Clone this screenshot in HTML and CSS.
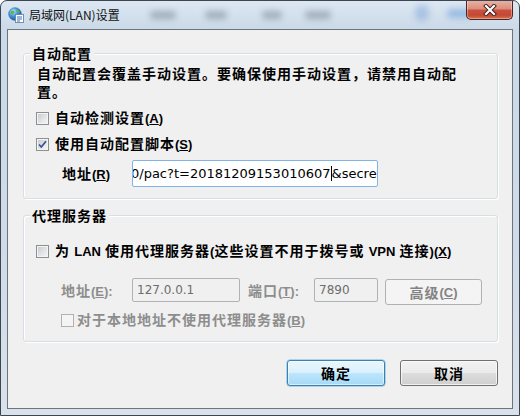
FILE: index.html
```html
<!DOCTYPE html>
<html lang="zh-CN">
<head>
<meta charset="utf-8">
<title>局域网(LAN)设置</title>
<link rel="stylesheet" href="styles.css">
</head>
<body>
<div class="window">
  <div class="titlebar">
    <div class="blur b1"></div>
    <div class="blur b2"></div>
    <div class="blur b3"></div>
    <div class="blur b4"></div>
    <div class="blur b5"></div>
    <div class="blur b6"></div>
    <svg class="appicon" width="16" height="16" viewBox="0 0 16 16">
      <defs>
        <radialGradient id="gl" cx="0.35" cy="0.3" r="0.8">
          <stop offset="0" stop-color="#bfe6ff"/>
          <stop offset="0.5" stop-color="#3d8fd8"/>
          <stop offset="1" stop-color="#1b4f9c"/>
        </radialGradient>
      </defs>
      <circle cx="7" cy="7" r="6.3" fill="url(#gl)" stroke="#2a5f9e" stroke-width="0.6"/>
      <path d="M3 4 C4.5 3 6 3.5 6.5 5 C6 6.5 4.5 6.5 4 8 C3 7.5 2.5 6 3 4 Z" fill="#5cb545"/>
      <path d="M8 2.5 C10 2.5 11.5 4 11.8 5.5 C10.5 6 9 5 8.5 4 Z" fill="#5cb545"/>
      <rect x="7.5" y="7.5" width="8" height="8" fill="#fff" stroke="#6b84a6" stroke-width="0.9"/>
      <path d="M9 10 H14 M9 12 H14 M9 14 H12" stroke="#3a6fc0" stroke-width="1"/>
    </svg>
    <span class="title">局域网(LAN)设置</span>
    <div class="close">
      <svg width="16" height="12" viewBox="0 0 16 12">
        <path d="M4 2 L12 10 M12 2 L4 10" stroke="#3b1b16" stroke-width="4" stroke-linecap="square"/>
        <path d="M4 2 L12 10 M12 2 L4 10" stroke="#ffffff" stroke-width="2.2" stroke-linecap="square"/>
      </svg>
    </div>
  </div>
  <div class="client">
    <fieldset class="group g1">
      <legend>自动配置</legend>
      <p class="desc">自动配置会覆盖手动设置。要确保使用手动设置，请禁用自动配<br>置。</p>
      <div class="check r1"><span class="cb"></span><span>自动检测设置<span class="lat">(<u>A</u>)</span></span></div>
      <div class="check r2"><span class="cb"><svg width="11" height="11" viewBox="0 0 11 11"><path d="M2 5.5 L4.3 8 L9 2.2" fill="none" stroke="#3a5294" stroke-width="1.7"/></svg></span><span>使用自动配置脚本<span class="lat">(<u>S</u>)</span></span></div>
      <div class="addr-row">
        <span class="lbl lbl-r">地址<span class="lat">(<u>R</u>)</span></span>
        <div class="input active"><span class="url">0/pac?t=20181209153010607<span class="caret"></span>&amp;secret=</span></div>
      </div>
    </fieldset>
    <fieldset class="group g2">
      <legend>代理服务器</legend>
      <div class="check r3"><span class="cb"></span><span>为 <span class="lat">LAN</span> 使用代理服务器<span class="lat">(</span>这些设置不用于拨号或 <span class="lat">VPN</span> 连接<span class="lat">)(<u>X</u>)</span></span></div>
      <div class="proxy-row">
        <span class="lbl lbl-e off">地址<span class="lat">(<u>E</u>):</span></span>
        <div class="input disabled ip">127.0.0.1</div>
        <span class="lbl lbl-t off">端口<span class="lat">(<u>T</u>):</span></span>
        <div class="input disabled port">7890</div>
        <div class="btn adv off">高级<span class="lat">(<u>C</u>)</span></div>
      </div>
      <div class="check r4 off"><span class="cb cb-off"></span><span>对于本地地址不使用代理服务器<span class="lat">(<u>B</u>)</span></span></div>
    </fieldset>
    <div class="buttons">
      <div class="btn ok">确定</div>
      <div class="btn cancel">取消</div>
    </div>
  </div>
</div>
</body>
</html>
```
FILE: styles.css
```css
body {
  margin: 0;
  background: #ffffff;
  font-family: "Noto Sans CJK SC", "Liberation Sans", sans-serif;
}

.window {
  width: 520px;
  height: 416px;
  box-sizing: border-box;
  border: 1px solid #3d4650;
  border-radius: 7px 7px 0 0;
  background: linear-gradient(180deg, #dce7f2 0px, #cbd9e8 28px, #cfdbe8 60%, #d9e2ec 100%);
  padding: 0 6px 6px 6px;
  display: flex;
  flex-direction: column;
  overflow: hidden;
}

.titlebar {
  height: 28px;
  box-sizing: border-box;
  padding-top: 5px;
  display: flex;
  align-items: flex-start;
  position: relative;
}

.blur {
  position: absolute;
  border-radius: 6px;
  filter: blur(3px);
  background: rgba(70, 80, 92, 0.35);
}
.b1 { left: 143px; top: 10px; width: 26px; height: 8px; }
.b2 { left: 198px; top: 10px; width: 22px; height: 8px; }
.b3 { left: 255px; top: 10px; width: 20px; height: 8px; }
.b4 { left: 298px; top: 10px; width: 26px; height: 8px; }
.b5 { left: 408px; top: 4px; width: 14px; height: 16px; background: rgba(90, 140, 210, 0.35); }
.b6 { left: 440px; top: 8px; width: 26px; height: 9px; background: rgba(80, 140, 215, 0.45); }

.appicon {
  width: 16px;
  height: 16px;
  margin-left: 1px;
  margin-top: 1px;
  position: relative;
}

.title {
  margin-left: 5px;
  font-size: 12px;
  line-height: 18px;
  color: #111;
  position: relative;
}

.close {
  position: absolute;
  top: -1px;
  right: 0;
  width: 47px;
  height: 20px;
  box-sizing: border-box;
  border: 1px solid #4f231c;
  border-top: none;
  border-radius: 0 0 5px 5px;
  background: linear-gradient(180deg, #eab4a6 0%, #dc8f7e 45%, #c8503d 55%, #c34a36 80%, #d7714f 100%);
  box-shadow: inset 0 0 0 1px rgba(255, 255, 255, 0.35);
  display: flex;
  align-items: center;
  justify-content: center;
}

.client {
  flex: 1;
  border: 1px solid #6d747c;
  background: #f0f0f0;
  display: flex;
  flex-direction: column;
  color: #000;
  font-size: 14px;
  font-weight: bold;
  letter-spacing: 1px;
}

.lat {
  font-family: "Liberation Sans", "DejaVu Sans", sans-serif;
  font-size: 13px;
  letter-spacing: 0;
}

fieldset.group {
  border: 1px solid #d5dfe5;
  border-radius: 3px;
  padding: 0 12px 11px 12px;
  min-width: 0;
  box-shadow: 1px 1px 0 #ffffff, inset 1px 1px 0 #ffffff;
}

.g1 { margin: 15px 14px 0 15px; }
.g2 { margin: 8px 14px 0 15px; padding-bottom: 17px; }

legend {
  padding: 0 2px;
  margin-left: -6px;
  font-size: 14px;
  line-height: 16px;
  background: #f0f0f0;
}

.desc {
  margin: 3px 0 0 1px;
  line-height: 18px;
}

.check {
  display: flex;
  align-items: center;
  height: 20px;
  line-height: 20px;
  white-space: nowrap;
}
.r1 { margin-top: 8px; }
.r2 { margin-top: 6px; }
.r3 { margin-top: 18px; }
.r4 { margin-top: 5px; margin-left: 25px; }

.cb {
  width: 13px;
  height: 13px;
  box-sizing: border-box;
  border: 1px solid #8e8f8f;
  background: linear-gradient(135deg, #c3c8ce 0%, #e2e4e7 55%, #f7f7f7 100%);
  box-shadow: inset 0 0 0 1px #f4f4f4;
  margin-right: 6px;
  flex: none;
  display: flex;
}
.cb svg { display: block; }
.cb-off {
  border-color: #b1b1b1;
  background: #f4f4f4;
  box-shadow: none;
  margin-right: 3px;
}

.off { color: #8d8d8d; }

.addr-row {
  margin-top: 6px;
  margin-left: 26px;
  display: flex;
  align-items: center;
}

.lbl { line-height: 24px; white-space: nowrap; }
.lbl-r { width: 70px; }
.lbl-e { width: 71px; }
.lbl-t { width: 66px; margin-left: 8px; }

.input {
  box-sizing: border-box;
  height: 24px;
  border-radius: 2px;
  font-family: "DejaVu Sans", "Liberation Sans", sans-serif;
  font-weight: normal;
  letter-spacing: 0;
  font-size: 12px;
  overflow: hidden;
  white-space: nowrap;
}

.input.active {
  width: 246px;
  height: 27px;
  border: 1px solid #7eb4ea;
  background: #ffffff;
  line-height: 25px;
  padding-left: 2px;
  text-indent: -4px;
  font-size: 13px;
}

.caret {
  display: inline-block;
  width: 1px;
  height: 15px;
  background: #000;
  vertical-align: -3px;
}

.input.disabled {
  border: 1px solid #b0b3b6;
  background: #f0f0f0;
  color: #6d6d6d;
  line-height: 22px;
  padding-left: 4px;
}
.ip { width: 108px; }
.port { width: 64px; padding-left: 3px; }

.proxy-row {
  margin-top: 17px;
  margin-left: 25px;
  display: flex;
  align-items: flex-start;
}

.btn {
  box-sizing: border-box;
  height: 26px;
  border-radius: 3px;
  display: flex;
  align-items: center;
  justify-content: center;
  font-size: 14px;
  white-space: nowrap;
}

.adv {
  width: 97px;
  margin-left: 7px;
  margin-top: 1px;
  border: 1px solid #adb2b5;
  background: #f4f4f4;
  color: #838383;
}

.buttons {
  margin-top: 18px;
  padding-right: 14px;
  display: flex;
  justify-content: flex-end;
  gap: 15px;
}

.ok {
  width: 98px;
  border: 1px solid #3c7fb1;
  background: linear-gradient(180deg, #eaf6fd 0%, #d9f0fc 50%, #bee6fd 50%, #a7d9f5 100%);
  box-shadow: inset 0 0 0 1px rgba(255, 255, 255, 0.55), 0 0 0 0.5px #68b8e8;
}

.cancel {
  width: 98px;
  border: 1px solid #707070;
  background: linear-gradient(180deg, #f2f2f2 0%, #ebebeb 50%, #dddddd 50%, #cfcfcf 100%);
  box-shadow: inset 0 0 0 1px rgba(255, 255, 255, 0.7);
}
```
